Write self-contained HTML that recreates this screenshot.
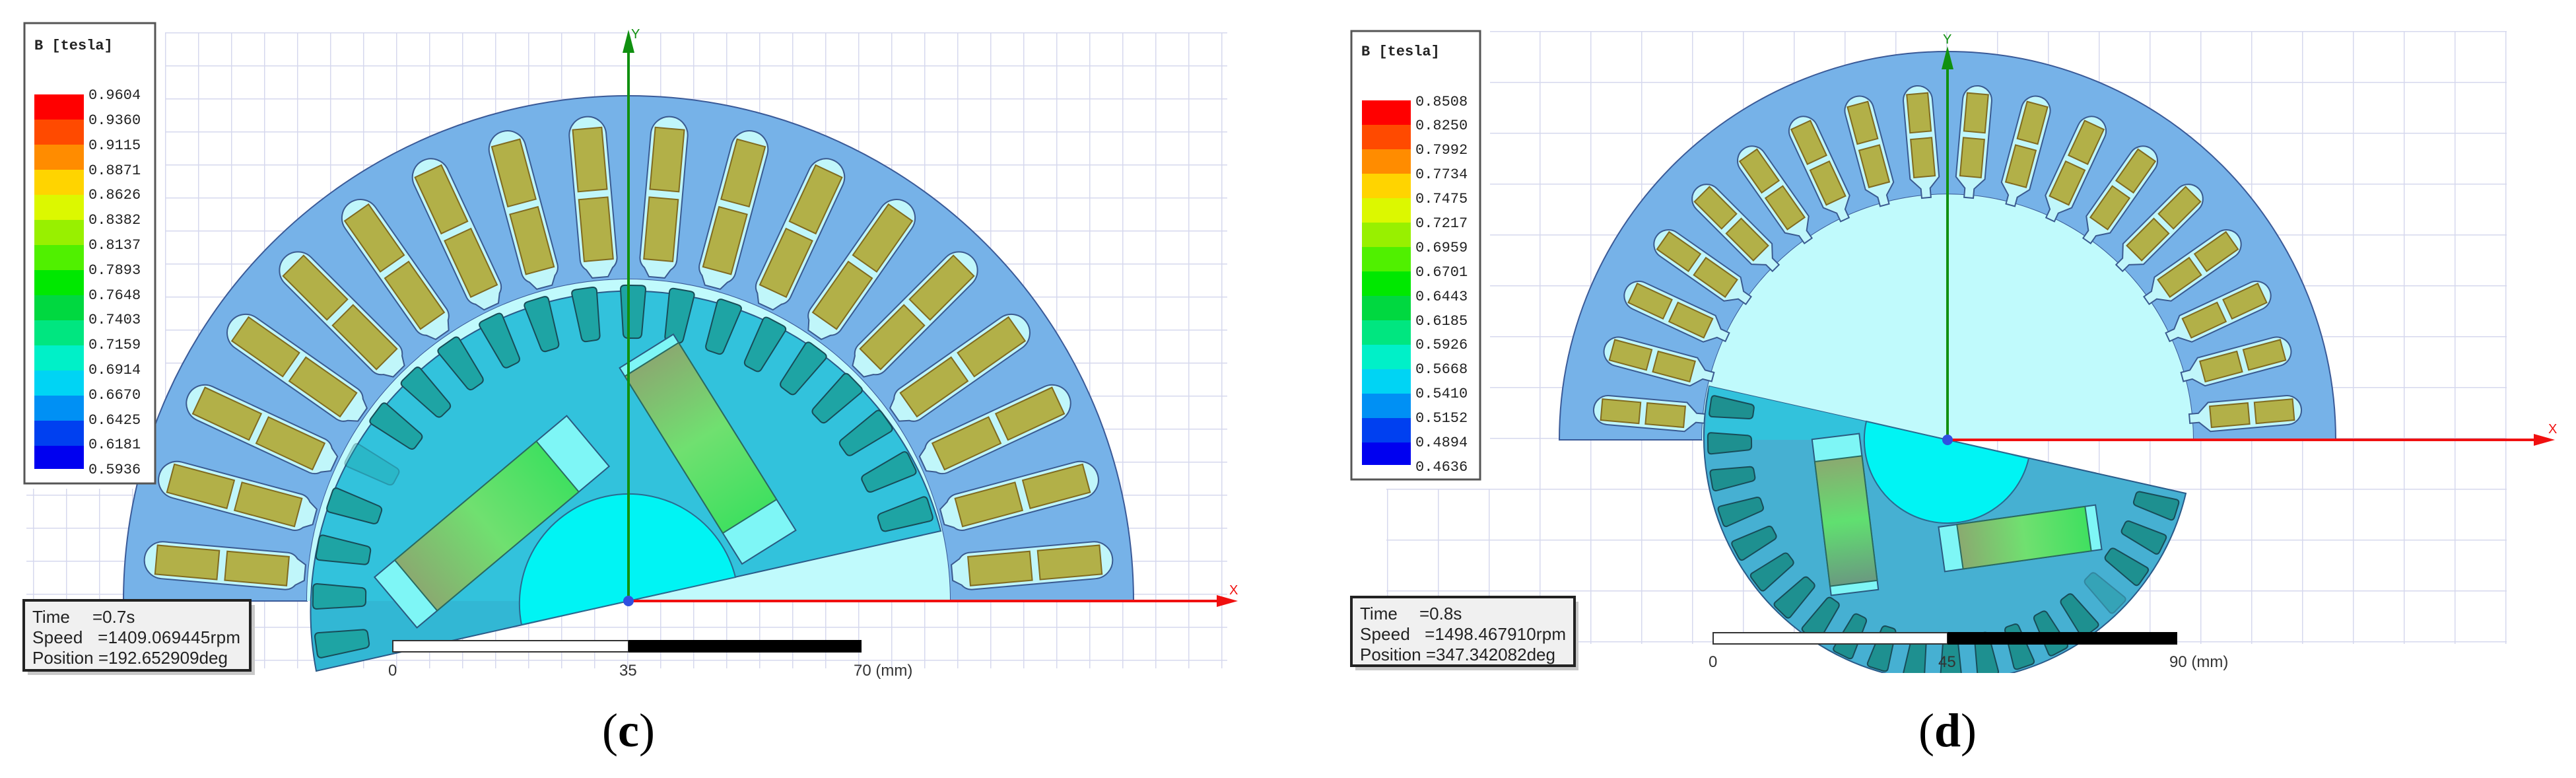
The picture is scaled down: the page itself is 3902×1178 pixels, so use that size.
<!DOCTYPE html>
<html><head><meta charset="utf-8"><style>
html,body{margin:0;padding:0;background:#fff;}
svg{display:block;}
.lab{font-family:"Liberation Mono",monospace;font-size:22px;fill:#222;}
.tb{font-family:"Liberation Sans",sans-serif;font-size:26px;fill:#222;}
.sc{font-family:"Liberation Sans",sans-serif;font-size:24px;fill:#333;}
.cap{font-family:"Liberation Serif",serif;font-size:72px;fill:#000;}
</style></head><body>
<svg width="3902" height="1178" viewBox="0 0 3902 1178" xmlns="http://www.w3.org/2000/svg">
<defs>
<pattern id="gL" x="250" y="49" width="50" height="50" patternUnits="userSpaceOnUse"><path d="M0 0H50M0 0V50" stroke="#d6d8ee" stroke-width="3" fill="none"/></pattern>
<pattern id="gR" x="2332" y="47" width="77" height="77" patternUnits="userSpaceOnUse"><path d="M0 0H77M0 0V77" stroke="#d6d8ee" stroke-width="3" fill="none"/></pattern>
<g id="slotL">
<path d="M-20 -505 A20 20 0 0 1 -28 -520 L-28 -708 A28 28 0 0 1 28 -708 L28 -520 A20 20 0 0 1 20 -505 L12 -492 L-12 -492 Z" fill="#c0f6fa" stroke="#3a5a90" stroke-width="2"/>
<rect x="-22" y="-718" width="44" height="94" fill="#b2b048" stroke="#806a20" stroke-width="2"/>
<rect x="-22" y="-612" width="44" height="94" fill="#b2b048" stroke="#806a20" stroke-width="2"/>
</g>
<g id="slotR">
<path d="M-7 -368 L-7 -382 L-22 -398 L-22 -516 A22 22 0 0 1 22 -516 L22 -398 L7 -382 L7 -368 Z" fill="#c0f6fa" stroke="#3a5a90" stroke-width="2"/>
<rect x="-16" y="-526" width="32" height="58" fill="#b2b048" stroke="#806a20" stroke-width="2"/>
<rect x="-16" y="-458" width="32" height="58" fill="#b2b048" stroke="#806a20" stroke-width="2"/>
</g>
<path id="barL" d="M-19 -472 Q-19 -478 -12 -478 L12 -478 Q19 -478 19 -472 L14 -404 Q13 -398 7 -398 L-7 -398 Q-13 -398 -14 -404 Z" fill="#1ea4a4" stroke="#184c58" stroke-width="2"/>
<path id="barR" d="M-16 -358 Q-16 -363 -10 -363 L10 -363 Q16 -363 16 -358 L11 -302 Q10 -297 5 -297 L-5 -297 Q-10 -297 -11 -302 Z" fill="#1e9090" stroke="#184c58" stroke-width="2"/>
<linearGradient id="mg1" x1="0" y1="0" x2="0" y2="1"><stop offset="0" stop-color="#8aaa70"/><stop offset="0.5" stop-color="#60e070"/><stop offset="1" stop-color="#6a9a80"/></linearGradient>
<linearGradient id="mg2" x1="0" y1="0" x2="1" y2="0"><stop offset="0" stop-color="#8aaa70"/><stop offset="0.5" stop-color="#70e070"/><stop offset="1" stop-color="#40e060"/></linearGradient>
<clipPath id="clipB"><rect x="0" y="0" width="3902" height="1019"/></clipPath>
<clipPath id="rotL"><path d="M952 910 L1425 804 A485 485 0 0 0 479 1016 Z"/></clipPath>
</defs>

<!-- ============ LEFT PANEL ============ -->
<rect x="250" y="49" width="1609" height="963" fill="url(#gL)"/>
<rect x="40" y="740" width="210" height="272" fill="url(#gL)"/>
<path d="M187 910 A765 765 0 0 1 1717 910 L1439 910 A487 487 0 0 0 465 910 Z" fill="#76b2e8" stroke="#3a5a98" stroke-width="2"/>
<path d="M465 910 A487 487 0 0 1 1439 910 Z" fill="#c0fafc"/>
<g transform="translate(952 910)">
<use href="#slotL" transform="rotate(85)"/><use href="#slotL" transform="rotate(75)"/><use href="#slotL" transform="rotate(65)"/><use href="#slotL" transform="rotate(55)"/><use href="#slotL" transform="rotate(45)"/><use href="#slotL" transform="rotate(35)"/><use href="#slotL" transform="rotate(25)"/><use href="#slotL" transform="rotate(15)"/><use href="#slotL" transform="rotate(5)"/>
<use href="#slotL" transform="rotate(-5)"/><use href="#slotL" transform="rotate(-15)"/><use href="#slotL" transform="rotate(-25)"/><use href="#slotL" transform="rotate(-35)"/><use href="#slotL" transform="rotate(-45)"/><use href="#slotL" transform="rotate(-55)"/><use href="#slotL" transform="rotate(-65)"/><use href="#slotL" transform="rotate(-75)"/><use href="#slotL" transform="rotate(-85)"/>
</g>
<path d="M952 910 L1425 804 A485 485 0 0 0 479 1016 Z" fill="#32c2dc" stroke="#2a5a88" stroke-width="2"/>
<rect x="465" y="910" width="600" height="110" fill="#3a6aa0" opacity="0.12" clip-path="url(#rotL)"/>
<g transform="translate(952 910)">
<use href="#barL" transform="rotate(72.85)"/><use href="#barL" transform="rotate(63.85)"/><use href="#barL" transform="rotate(54.85)"/><use href="#barL" transform="rotate(45.85)"/><use href="#barL" transform="rotate(36.85)"/><use href="#barL" transform="rotate(27.85)"/><use href="#barL" transform="rotate(18.85)"/><use href="#barL" transform="rotate(9.85)"/><use href="#barL" transform="rotate(0.85)"/><use href="#barL" transform="rotate(-8.15)"/>
<use href="#barL" transform="rotate(-17.15)"/><use href="#barL" transform="rotate(-26.15)"/><use href="#barL" transform="rotate(-35.15)"/><use href="#barL" transform="rotate(-44.15)"/><use href="#barL" transform="rotate(-53.15)"/><use href="#barL" transform="rotate(-62.15)" style="opacity:0.35"/><use href="#barL" transform="rotate(-71.15)"/><use href="#barL" transform="rotate(-80.15)"/><use href="#barL" transform="rotate(-89.15)"/><use href="#barL" transform="rotate(-98.15)"/>
</g>
<path d="M952 910 L1114 874 A166 166 0 0 0 790 946 Z" fill="#00f4f4" stroke="#2a6a90" stroke-width="2"/>
<g transform="translate(745 790) rotate(-40)">
<rect x="-190" y="-50" width="380" height="100" fill="#7ef6f6" stroke="#2a5a80" stroke-width="2"/>
<rect x="-150" y="-50" width="280" height="100" fill="url(#mg2)" stroke="#2a6a60" stroke-width="2"/>
</g>
<g transform="translate(1072 680) rotate(58)">
<rect x="-175" y="-48" width="350" height="96" fill="#7ef6f6" stroke="#2a5a80" stroke-width="2"/>
<rect x="-160" y="-48" width="280" height="96" fill="url(#mg2)" stroke="#2a6a60" stroke-width="2"/>
</g>
<line x1="952" y1="910" x2="952" y2="75" stroke="#109010" stroke-width="4"/>
<path d="M952 45 L943 80 L961 80 Z" fill="#109010"/>
<text x="956" y="58" font-family="Liberation Sans,sans-serif" font-size="20" fill="#109010">Y</text>
<line x1="952" y1="910" x2="1850" y2="910" stroke="#f01010" stroke-width="4"/>
<path d="M1875 910 L1843 901 L1843 919 Z" fill="#f01010"/>
<text x="1862" y="900" font-family="Liberation Sans,sans-serif" font-size="20" fill="#f01010">X</text>
<circle cx="952" cy="910" r="8" fill="#3050e0"/>
<rect x="37" y="35" width="198" height="697" fill="#fff" stroke="#555" stroke-width="3"/>
<text x="52" y="75" class="lab" font-weight="bold">B [tesla]</text>
<g>
<rect x="52" y="143" width="75" height="38" fill="#ff0000"/><rect x="52" y="181" width="75" height="38" fill="#ff4a00"/><rect x="52" y="219" width="75" height="38" fill="#ff8c00"/><rect x="52" y="257" width="75" height="38" fill="#ffd400"/><rect x="52" y="295" width="75" height="38" fill="#dcf800"/><rect x="52" y="333" width="75" height="38" fill="#98f000"/><rect x="52" y="371" width="75" height="38" fill="#50f000"/><rect x="52" y="409" width="75" height="38" fill="#00e800"/><rect x="52" y="447" width="75" height="38" fill="#00d840"/><rect x="52" y="485" width="75" height="38" fill="#00e680"/><rect x="52" y="523" width="75" height="38" fill="#00f0c8"/><rect x="52" y="561" width="75" height="38" fill="#00d4f4"/><rect x="52" y="599" width="75" height="38" fill="#0090f4"/><rect x="52" y="637" width="75" height="38" fill="#0040f0"/><rect x="52" y="675" width="75" height="35" fill="#0000f0"/>
</g>
<text class="lab" x="134" y="150">0.9604</text><text class="lab" x="134" y="188">0.9360</text><text class="lab" x="134" y="226">0.9115</text><text class="lab" x="134" y="264">0.8871</text><text class="lab" x="134" y="301">0.8626</text><text class="lab" x="134" y="339">0.8382</text><text class="lab" x="134" y="377">0.8137</text><text class="lab" x="134" y="415">0.7893</text><text class="lab" x="134" y="453">0.7648</text><text class="lab" x="134" y="490">0.7403</text><text class="lab" x="134" y="528">0.7159</text><text class="lab" x="134" y="566">0.6914</text><text class="lab" x="134" y="604">0.6670</text><text class="lab" x="134" y="642">0.6425</text><text class="lab" x="134" y="679">0.6181</text><text class="lab" x="134" y="717">0.5936</text>
<rect x="42" y="916" width="344" height="106" fill="#c8c8c8"/>
<rect x="36" y="909" width="343" height="106" fill="#f0f0f0" stroke="#222" stroke-width="4"/>
<text class="tb" x="49" y="943">Time</text><text class="tb" x="140" y="943">=0.7s</text>
<text class="tb" x="49" y="974" textLength="315">Speed &#160;&#160;=1409.069445rpm</text>
<text class="tb" x="49" y="1005" textLength="296">Position =192.652909deg</text>
<rect x="595" y="970" width="357" height="17" fill="#fff" stroke="#333" stroke-width="2"/>
<rect x="952" y="969" width="353" height="19" fill="#000"/>
<text class="sc" x="588" y="1023">0</text><text class="sc" x="938" y="1023">35</text><text class="sc" x="1293" y="1023">70 (mm)</text>
<text class="cap" x="952" y="1130" text-anchor="middle">(<tspan font-weight="bold">c</tspan>)</text>

<!-- ============ RIGHT PANEL ============ -->
<rect x="2257" y="47" width="1540" height="928" fill="url(#gR)"/>
<rect x="2100" y="740" width="157" height="235" fill="url(#gR)"/>
<path d="M2362 666 A588 588 0 0 1 3538 666 L3322 666 A372 372 0 0 0 2578 666 Z" fill="#76b2e8" stroke="#3a5a98" stroke-width="2"/>
<path d="M2578 666 A372 372 0 0 1 3322 666 Z" fill="#c0fafc"/>
<g transform="translate(2950 666)">
<use href="#slotR" transform="rotate(85)"/><use href="#slotR" transform="rotate(75)"/><use href="#slotR" transform="rotate(65)"/><use href="#slotR" transform="rotate(55)"/><use href="#slotR" transform="rotate(45)"/><use href="#slotR" transform="rotate(35)"/><use href="#slotR" transform="rotate(25)"/><use href="#slotR" transform="rotate(15)"/><use href="#slotR" transform="rotate(5)"/>
<use href="#slotR" transform="rotate(-5)"/><use href="#slotR" transform="rotate(-15)"/><use href="#slotR" transform="rotate(-25)"/><use href="#slotR" transform="rotate(-35)"/><use href="#slotR" transform="rotate(-45)"/><use href="#slotR" transform="rotate(-55)"/><use href="#slotR" transform="rotate(-65)"/><use href="#slotR" transform="rotate(-75)"/><use href="#slotR" transform="rotate(-85)"/>
</g>
<g clip-path="url(#clipB)">
<path d="M2950 666 L2589 585 A370 370 0 0 0 3311 747 Z" fill="#46b0d2" stroke="#2a5a88" stroke-width="2"/>
<path d="M2950 666 L2589 585 L2582 666 Z" fill="#32c2dc"/>
<g transform="translate(2950 666)">
<use href="#barR" transform="rotate(-81.84)"/><use href="#barR" transform="rotate(-90.84)"/><use href="#barR" transform="rotate(-99.84)"/><use href="#barR" transform="rotate(-108.84)"/><use href="#barR" transform="rotate(-117.84)"/><use href="#barR" transform="rotate(-126.84)"/><use href="#barR" transform="rotate(-135.84)"/><use href="#barR" transform="rotate(-144.84)"/><use href="#barR" transform="rotate(-153.84)"/><use href="#barR" transform="rotate(-162.84)"/>
<use href="#barR" transform="rotate(-171.84)"/><use href="#barR" transform="rotate(-180.84)"/><use href="#barR" transform="rotate(-189.84)"/><use href="#barR" transform="rotate(-198.84)"/><use href="#barR" transform="rotate(-207.84)"/><use href="#barR" transform="rotate(-216.84)"/><use href="#barR" transform="rotate(-225.84)" style="opacity:0.4"/><use href="#barR" transform="rotate(-234.84)"/><use href="#barR" transform="rotate(-243.84)"/><use href="#barR" transform="rotate(-252.84)"/>
</g>
</g>
<path d="M2950 666 L2827 638 A126 126 0 0 0 3073 694 Z" fill="#00f4f4" stroke="#2a6a90" stroke-width="2"/>
<g transform="translate(2795 779) rotate(-7)">
<rect x="-36" y="-119" width="72" height="238" fill="#7ef6f6" stroke="#2a5a80" stroke-width="2"/>
<rect x="-36" y="-85" width="72" height="190" fill="url(#mg1)" stroke="#2a6a60" stroke-width="2"/>
</g>
<g transform="translate(3060 815) rotate(-8)">
<rect x="-120" y="-34" width="240" height="68" fill="#7ef6f6" stroke="#2a5a80" stroke-width="2"/>
<rect x="-92" y="-34" width="196" height="68" fill="url(#mg2)" stroke="#2a6a60" stroke-width="2"/>
</g>
<line x1="2950" y1="666" x2="2950" y2="100" stroke="#109010" stroke-width="4"/>
<path d="M2950 70 L2941 105 L2959 105 Z" fill="#109010"/>
<text x="2943" y="66" font-family="Liberation Sans,sans-serif" font-size="20" fill="#109010">Y</text>
<line x1="2950" y1="666" x2="3845" y2="666" stroke="#f01010" stroke-width="4"/>
<path d="M3870 666 L3838 657 L3838 675 Z" fill="#f01010"/>
<text x="3860" y="656" font-family="Liberation Sans,sans-serif" font-size="20" fill="#f01010">X</text>
<circle cx="2950" cy="666" r="8" fill="#3050e0"/>
<rect x="2047" y="47" width="195" height="679" fill="#fff" stroke="#555" stroke-width="3"/>
<text x="2062" y="84" class="lab" font-weight="bold">B [tesla]</text>
<g>
<rect x="2063" y="152" width="74" height="37" fill="#ff0000"/><rect x="2063" y="189" width="74" height="37" fill="#ff4a00"/><rect x="2063" y="226" width="74" height="37" fill="#ff8c00"/><rect x="2063" y="263" width="74" height="37" fill="#ffd400"/><rect x="2063" y="300" width="74" height="37" fill="#dcf800"/><rect x="2063" y="337" width="74" height="37" fill="#98f000"/><rect x="2063" y="374" width="74" height="37" fill="#50f000"/><rect x="2063" y="411" width="74" height="37" fill="#00e800"/><rect x="2063" y="448" width="74" height="37" fill="#00d840"/><rect x="2063" y="485" width="74" height="37" fill="#00e680"/><rect x="2063" y="522" width="74" height="37" fill="#00f0c8"/><rect x="2063" y="559" width="74" height="37" fill="#00d4f4"/><rect x="2063" y="596" width="74" height="37" fill="#0090f4"/><rect x="2063" y="633" width="74" height="37" fill="#0040f0"/><rect x="2063" y="670" width="74" height="34" fill="#0000f0"/>
</g>
<text class="lab" x="2144" y="160">0.8508</text><text class="lab" x="2144" y="196">0.8250</text><text class="lab" x="2144" y="233">0.7992</text><text class="lab" x="2144" y="270">0.7734</text><text class="lab" x="2144" y="307">0.7475</text><text class="lab" x="2144" y="344">0.7217</text><text class="lab" x="2144" y="381">0.6959</text><text class="lab" x="2144" y="418">0.6701</text><text class="lab" x="2144" y="455">0.6443</text><text class="lab" x="2144" y="492">0.6185</text><text class="lab" x="2144" y="528">0.5926</text><text class="lab" x="2144" y="565">0.5668</text><text class="lab" x="2144" y="602">0.5410</text><text class="lab" x="2144" y="639">0.5152</text><text class="lab" x="2144" y="676">0.4894</text><text class="lab" x="2144" y="713">0.4636</text>
<rect x="2053" y="911" width="338" height="104" fill="#c8c8c8"/>
<rect x="2047" y="904" width="338" height="104" fill="#f0f0f0" stroke="#222" stroke-width="4"/>
<text class="tb" x="2060" y="938">Time</text><text class="tb" x="2150" y="938">=0.8s</text>
<text class="tb" x="2060" y="969" textLength="312">Speed &#160;&#160;=1498.467910rpm</text>
<text class="tb" x="2060" y="1000" textLength="296">Position =347.342082deg</text>
<rect x="2595" y="958" width="355" height="17" fill="#fff" stroke="#333" stroke-width="2"/>
<rect x="2950" y="957" width="348" height="19" fill="#000"/>
<text class="sc" x="2588" y="1010">0</text><text class="sc" x="2936" y="1010">45</text><text class="sc" x="3286" y="1010">90 (mm)</text>
<text class="cap" x="2950" y="1130" text-anchor="middle">(<tspan font-weight="bold">d</tspan>)</text>
</svg>
</body></html>
